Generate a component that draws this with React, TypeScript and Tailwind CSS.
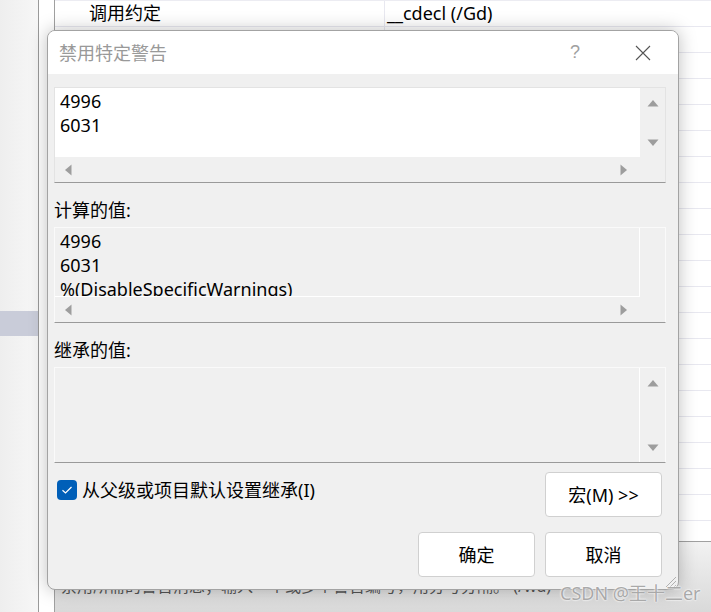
import React from 'react';

const FONT = "font-['Noto_Sans','Noto_Sans_CJK_SC',sans-serif]";

function ArrowUp() {
  return (
    <svg width="12" height="8" viewBox="0 0 12 8">
      <polygon points="0.5,7.5 6,1 11.5,7.5" fill="#9d9d9d" />
    </svg>
  );
}

function ArrowDown() {
  return (
    <svg width="12" height="8" viewBox="0 0 12 8">
      <polygon points="0.5,0.5 6,7 11.5,0.5" fill="#9d9d9d" />
    </svg>
  );
}

function ArrowLeft() {
  return (
    <svg width="8" height="12" viewBox="0 0 8 12">
      <polygon points="7.5,0.5 1,6 7.5,11.5" fill="#9d9d9d" />
    </svg>
  );
}

function ArrowRight() {
  return (
    <svg width="8" height="12" viewBox="0 0 8 12">
      <polygon points="0.5,0.5 7,6 0.5,11.5" fill="#9d9d9d" />
    </svg>
  );
}

function HScroll() {
  return (
    <div className="flex items-center justify-between bg-[#f0f0f0] pl-[9px] pr-[12px]">
      <ArrowLeft />
      <ArrowRight />
    </div>
  );
}

const rows = Array.from({ length: 21 });

export default function App() {
  return (
    <div className={`relative w-[711px] h-[612px] overflow-hidden bg-white text-[18px] text-black ${FONT}`}>
      {/* 背景：属性页 */}
      <div className="flex h-full">
        <div className="w-[39px] shrink-0 border-r border-[#9a9a9a] bg-gradient-to-r from-[#eeeeee] to-[#f7f7f7] pt-[311px]">
          <div className="h-[25px] bg-[#c9ccd9]" />
        </div>
        <div className="w-[16px] shrink-0 border-r border-[#a0a0a0] bg-white" />
        <div className="flex-1 flex flex-col min-w-0">
          <div className="flex-1 overflow-hidden border-t border-[#ececf2]">
            {rows.map((_, i) => (
              <div key={i} className="flex h-[26px] border-b border-[#e8e8f0]">
                <div className="w-[28px] shrink-0 bg-white" />
                <div className="w-[302px] shrink-0 border-r border-[#e8e8f0] pl-[6px] leading-[25px]">
                  {i === 0 ? '调用约定' : ''}
                </div>
                <div className="flex-1 pl-[2px] leading-[25px]">{i === 0 ? '__cdecl (/Gd)' : ''}</div>
              </div>
            ))}
          </div>
          <div className="h-[71px] shrink-0 border-t border-[#a0a0a0] bg-gradient-to-b from-[#f2f2f2] to-[#d9d9d9] pl-[6px] pt-[32px] text-[16px] text-[#555] leading-[24px] whitespace-nowrap">
            禁用所需的警告消息；输入一个或多个警告编号，用分号分隔。 (/wd)
          </div>
        </div>
      </div>

      {/* 对话框 */}
      <div className="absolute left-[47px] top-[30px] w-[632px] h-[560px] flex flex-col rounded-[8px] border border-[#a3a3a3] bg-[#f0f0f0] shadow-[0_0_18px_rgba(0,0,0,0.25)] overflow-hidden">
        <div className="h-[43px] shrink-0 flex items-center bg-white pl-[11px] text-[#999999]">
          <span className="flex-1 leading-[24px]">禁用特定警告</span>
          <span className="w-[20px] text-center text-[#a0a0a0] font-['Liberation_Sans',sans-serif] font-light">?</span>
          <div className="w-[50px]" />
          <svg width="16" height="16" viewBox="0 0 16 16" className="mr-[27px]">
            <path d="M1 1 L15 15 M15 1 L1 15" stroke="#555" strokeWidth="1.1" />
          </svg>
        </div>

        <div className="flex flex-col pl-[6px] pr-[12px]">
          {/* 编辑框 */}
          <div className="mt-[13px] h-[96px] grid grid-cols-[1fr_25px] grid-rows-[69px_25px] border border-[#e3e3e3] border-b-[#9a9a9a] bg-[#f0f0f0]">
            <div className="bg-white pl-[5px] pt-[1px] leading-[24px]">
              <div>4996</div>
              <div>6031</div>
            </div>
            <div className="flex flex-col items-center justify-between pt-[11px] pb-[10px]">
              <ArrowUp />
              <ArrowDown />
            </div>
            <HScroll />
            <div />
          </div>

          <div className="pt-[15px] pb-[5px] leading-[24px]">计算的值:</div>

          <div className="h-[96px] grid grid-cols-[1fr_25px] grid-rows-[69px_25px] border border-[#fafafa] border-b-[#9a9a9a] bg-[#f0f0f0]">
            <div className="overflow-hidden border-r border-b border-white pl-[5px] pt-[1px] leading-[24px]">
              <div>4996</div>
              <div>6031</div>
              <div>%(DisableSpecificWarnings)</div>
            </div>
            <div />
            <HScroll />
            <div />
          </div>

          <div className="pt-[15px] pb-[5px] leading-[24px]">继承的值:</div>

          <div className="h-[96px] grid grid-cols-[1fr_25px] border border-[#fafafa] border-b-[#9a9a9a] bg-[#f0f0f0]">
            <div className="border-r border-white" />
            <div className="flex flex-col items-center justify-between pt-[11px] pb-[10px]">
              <ArrowUp />
              <ArrowDown />
            </div>
          </div>

          <div className="mt-[9px] flex items-start">
            <div className="flex items-center mt-[7px] ml-[3px] gap-[5px] flex-1">
              <div className="w-[20px] h-[20px] rounded-[4px] bg-[#005fb8] flex items-center justify-center">
                <svg width="12" height="10" viewBox="0 0 12 10">
                  <path d="M1.5 5.2 L4.5 8 L10.5 2" fill="none" stroke="white" strokeWidth="1.2" />
                </svg>
              </div>
              <span className="leading-[22px]">从父级或项目默认设置继承(I)</span>
            </div>
            <button className="mr-[4px] w-[117px] h-[45px] rounded-[4px] border border-[#d0d0d0] bg-white leading-[24px]">
              宏(M) &gt;&gt;
            </button>
          </div>

          <div className="mt-[15px] flex justify-end gap-[10px] mr-[4px]">
            <button className="w-[117px] h-[45px] rounded-[4px] border border-[#d0d0d0] bg-white leading-[24px]">确定</button>
            <button className="w-[117px] h-[45px] rounded-[4px] border border-[#d0d0d0] bg-white leading-[24px]">取消</button>
          </div>
        </div>

        <svg width="14" height="14" viewBox="0 0 14 14" className="absolute right-[1px] bottom-[1px]">
          <path d="M13 3 L3 13 M13 7 L7 13 M13 11 L11 13" stroke="#b0b0b0" strokeWidth="1" />
        </svg>
      </div>

      {/* 水印 */}
      <div className="absolute left-[560px] top-[581px] text-[18px] leading-[24px] text-[#a9a9a9] [text-shadow:0_0_2px_#fff,0_0_2px_#fff] whitespace-nowrap">
        CSDN @王十二er
      </div>
    </div>
  );
}
